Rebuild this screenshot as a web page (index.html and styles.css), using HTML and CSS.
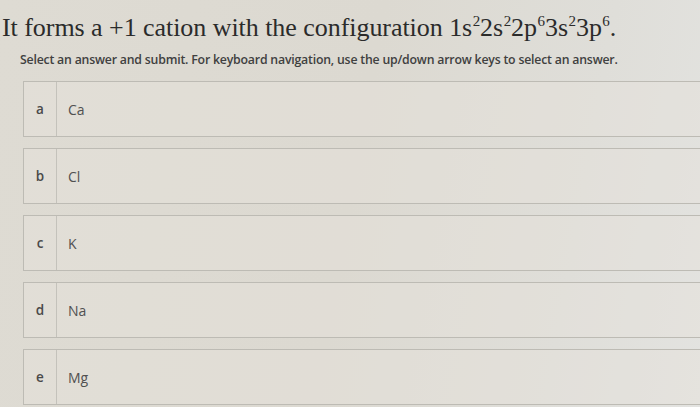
FILE: index.html
```html
<!DOCTYPE html>
<html>
<head>
<meta charset="utf-8">
<link rel="stylesheet" href="styles.css">
</head>
<body>
<div class="page">
  <h1 class="question">It forms a +1 cation with the configuration 1s<sup>2</sup>2s<sup>2</sup>2p<sup>6</sup>3s<sup>2</sup>3p<sup>6</sup>.</h1>
  <p class="hint">Select an answer and submit. For keyboard navigation, use the up/down arrow keys to select an answer.</p>
  <div class="options">
    <div class="option"><span class="letter">a</span><span class="answer">Ca</span></div>
    <div class="option"><span class="letter">b</span><span class="answer">Cl</span></div>
    <div class="option"><span class="letter">c</span><span class="answer">K</span></div>
    <div class="option"><span class="letter">d</span><span class="answer">Na</span></div>
    <div class="option"><span class="letter">e</span><span class="answer">Mg</span></div>
  </div>
</div>
</body>
</html>
```
FILE: styles.css
```css
html, body {
  margin: 0;
  padding: 0;
}
body {
  width: 700px;
  height: 407px;
  overflow: hidden;
  background: linear-gradient(100deg, #dedbd3 0%, #dcd9d1 50%, #dfded9 80%, #e3e3e0 100%);
}
.page {
  padding: 13px 0 0 2px;
}
.question {
  margin: 0;
  font-family: "Liberation Serif", "Times New Roman", serif;
  font-weight: normal;
  font-size: 26px;
  line-height: 30px;
  color: #2b2b2b;
  letter-spacing: -0.05px;
  white-space: nowrap;
}
.question sup {
  font-size: 15px;
  line-height: 0;
  vertical-align: 10px;
  margin-left: 0.5px;
}
.hint {
  margin: 9px 0 0 18px;
  font-family: "Open Sans", "Noto Sans", sans-serif;
  font-weight: 600;
  font-size: 12.3px;
  line-height: 16px;
  color: #404040;
  letter-spacing: -0.2px;
  white-space: nowrap;
}
.options {
  margin: 13px 0 0 21px;
  display: flex;
  flex-direction: column;
  gap: 11px;
}
.option {
  display: flex;
  height: 54px;
  width: 690px;
  border: 1px solid #bdbbb4;
  border-right: none;
  background: rgba(230, 227, 220, 0.45);
}
.letter {
  width: 32px;
  border-right: 1px solid #c4c2bb;
  display: flex;
  align-items: center;
  justify-content: center;
  font-family: "Open Sans", "Noto Sans", sans-serif;
  font-weight: 600;
  font-size: 13.5px;
  color: #4a4a4a;
}
.answer {
  display: flex;
  align-items: center;
  padding-left: 11px;
  font-family: "Open Sans", "Noto Sans", sans-serif;
  font-size: 14px;
  color: #505050;
}
```
